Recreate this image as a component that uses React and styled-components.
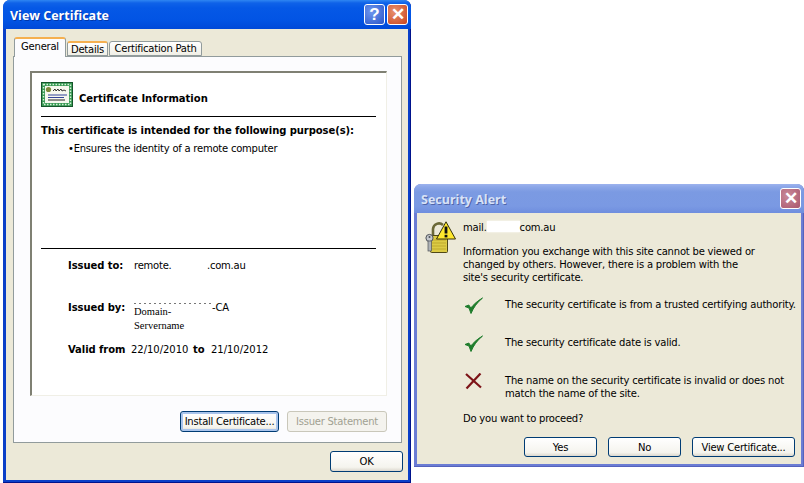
import React from 'react';
import styled, { createGlobalStyle } from 'styled-components';

const GlobalStyle = createGlobalStyle`
  html, body { margin: 0; padding: 0; background: #ffffff; }
  body { font-family: "DejaVu Sans", "Noto Sans", sans-serif; font-size: 10px; letter-spacing: -0.23px; color: #000; }
  #root { width: 804px; height: 483px; position: relative; overflow: hidden; }
`;

// dialogs sit on a free desktop, so they get coordinates
const Dialog = styled.div`
  position: absolute;
  left: ${(p) => p.$left}px;
  top: ${(p) => p.$top}px;
  width: ${(p) => p.$width}px;
  height: ${(p) => p.$height}px;
  box-sizing: border-box;
  display: flex;
  flex-direction: column;
  padding: 0 3px 3px;
  border-radius: 7px 7px 0 0;
  background: ${(p) => (p.$inactive ? '#6b7cd4' : '#0a3fc8')};
  box-shadow: ${(p) => (p.$inactive ? 'inset -1px -1px 0 #5563bd' : 'inset -1px -1px 0 #00138c')};
`;

const TitleBar = styled.div`
  height: ${(p) => p.$height}px;
  flex: none;
  margin: 0 -3px;
  padding: 2px 3px 0 7px;
  box-sizing: border-box;
  display: flex;
  align-items: center;
  justify-content: space-between;
  border-radius: 7px 7px 0 0;
  background: ${(p) =>
    p.$inactive
      ? 'linear-gradient(#9db3ee 0, #8ba6e8 3px, #7b9ae2 8px, #7a99e3 22px, #6f8ede 100%)'
      : 'linear-gradient(#2f86f2 0, #0f62e8 3px, #0558e6 8px, #0254e4 20px, #0049d8 100%)'};
`;

const TitleText = styled.span`
  font-family: "Open Sans", sans-serif;
  font-weight: 700;
  font-size: 12.5px;
  letter-spacing: 0;
  color: ${(p) => (p.$inactive ? '#d8e2f7' : '#ffffff')};
  text-shadow: 1px 1px 0 rgba(0, 0, 60, 0.35);
`;

const TitleButtons = styled.div`
  display: flex;
  gap: 2px;
  margin-top: -2px;
`;

const CaptionButton = styled.div`
  width: 21px;
  height: 21px;
  box-sizing: border-box;
  border: 1px solid #fff;
  border-radius: 3px;
  display: flex;
  align-items: center;
  justify-content: center;
  color: #fff;
  letter-spacing: 0;
  font: 700 17px "Liberation Sans", sans-serif;
  background: ${(p) =>
    p.$kind === 'help'
      ? 'radial-gradient(circle at 35% 35%, #6f97ee, #2a55c8)'
      : p.$kind === 'closeOff'
        ? 'radial-gradient(circle at 35% 35%, #c98a98, #a9566d)'
        : 'radial-gradient(circle at 35% 35%, #e8926f, #c8431d)'};
`;

const Body = styled.div`
  flex: 1;
  min-height: 0;
  background: #ece9d8;
  display: flex;
  flex-direction: column;
`;

const TabStrip = styled.div`
  display: flex;
  align-items: flex-end;
  height: 27px;
  flex: none;
  padding-left: 8px;
`;

const Tab = styled.div`
  height: ${(p) => (p.$active ? 20 : 15)}px;
  width: ${(p) => p.$width}px;
  box-sizing: border-box;
  margin-right: 1px;
  padding-top: ${(p) => (p.$active ? 2 : 1)}px;
  text-align: center;
  background: ${(p) => (p.$active ? '#fcfcfe' : 'linear-gradient(#fff, #f0efe6)')};
  border: 1px solid #919b9c;
  border-bottom: ${(p) => (p.$active ? 'none' : '1px solid #919b9c')};
  border-top: ${(p) => (p.$hot ? '2px solid #f5b050' : '1px solid #919b9c')};
  border-radius: 3px 3px 0 0;
  white-space: nowrap;
  margin-bottom: ${(p) => (p.$active ? -1 : 0)}px;
  position: relative;
  z-index: ${(p) => (p.$active ? 1 : 0)};
`;

const TabPanel = styled.div`
  width: 389px;
  height: 387px;
  margin-left: 7px;
  flex: none;
  box-sizing: border-box;
  background: #fcfcfe;
  border: 1px solid #919b9c;
  padding: 14px 14px 0 16px;
`;

const CertBox = styled.div`
  width: 357px;
  height: 325px;
  box-sizing: border-box;
  background: #ffffff;
  border-top: 2px solid #7f8073;
  border-left: 2px solid #7f8073;
  border-right: 1px solid #f0efe6;
  border-bottom: 1px solid #f0efe6;
  padding: 0 10px 0 9px;
  display: flex;
  flex-direction: column;
`;

const CertHeading = styled.div`
  height: 44px;
  flex: none;
  box-sizing: border-box;
  padding-top: 9px;
  display: flex;
  align-items: flex-start;
  gap: 6px;
  border-bottom: 1px solid #000;
  font-weight: 700;
  letter-spacing: 0;
  line-height: 33px;
`;

const Purpose = styled.div`
  height: 132px;
  flex: none;
  box-sizing: border-box;
  border-bottom: 1px solid #000;
  padding-top: 7px;
`;

const Strong = styled.div`
  font-weight: 700;
  letter-spacing: -0.07px;
  line-height: 13px;
`;

const Bullet = styled.div`
  margin: 5px 0 0 27px;
  line-height: 13px;
`;

const InfoRow = styled.div`
  display: flex;
  position: relative;
  padding-left: 27px;
  margin-top: ${(p) => p.$top}px;
  line-height: 13px;
`;

const RowLabel = styled.span`
  font-weight: 700;
  letter-spacing: -0.07px;
  width: ${(p) => p.$width}px;
  flex: none;
`;

const DateValue = styled.span`
  width: ${(p) => p.$width}px;
  flex: none;
  letter-spacing: -0.03px;
  white-space: nowrap;
`;

// what is left of the scrubbed issuer name: only the tops of the letters
const ScrubbedTops = styled.span`
  width: 78px;
  height: 1px;
  margin-top: 2px;
  flex: none;
  background: repeating-linear-gradient(90deg, #777 0 2px, transparent 2px 5px);
`;

const SerifNote = styled.span`
  position: absolute;
  left: 93px;
  top: 4px;
  width: 60px;
  font: 10.5px/14px "Liberation Serif", serif;
  letter-spacing: 0;
`;

const Redaction = styled.span`
  display: inline-block;
  width: 33px;
  height: 11px;
  vertical-align: -1px;
  background: #ffffff;
  box-shadow: 0 0 2px #ffffff;
`;

const ButtonRow = styled.div`
  display: flex;
  justify-content: flex-end;
  gap: ${(p) => p.$gap || 0}px;
  margin: ${(p) => p.$margin};
`;

const PushButton = styled.button`
  width: ${(p) => p.$width}px;
  height: ${(p) => p.$height || 21}px;
  box-sizing: border-box;
  padding: 0;
  font: inherit;
  letter-spacing: inherit;
  color: ${(p) => (p.disabled ? '#a1a192' : '#000')};
  border: 1px solid ${(p) => (p.disabled ? '#c9c7ba' : '#003c74')};
  border-radius: 3px;
  background: ${(p) => (p.disabled ? '#f4f3ee' : 'linear-gradient(#fff, #f5f4ee 80%, #dcd8ce)')};
  box-shadow: ${(p) => (p.$focused ? 'inset 0 0 0 2px #a9c4ec' : 'none')};
`;

const AlertBody = styled(Body)`
  padding: 8px 9px 0 8px;
`;

const AlertTop = styled.div`
  display: flex;
  gap: 7px;
`;

const AlertCopy = styled.div`
  line-height: 13px;
  letter-spacing: -0.2px;
`;

const AlertPara = styled.p`
  margin: 11px 0 0;
`;

const CheckList = styled.div`
  display: flex;
  flex-direction: column;
  margin: 14px 0 0 39px;
`;

const CheckRow = styled.div`
  display: flex;
  gap: 22px;
  line-height: 13px;
  letter-spacing: -0.18px;
  white-space: nowrap;
  height: 38px;
`;

const MarkSlot = styled.div`
  width: 19px;
  flex: none;
  margin-top: -1px;
`;

const Question = styled.div`
  margin: 0 0 0 38px;
  line-height: 13px;
`;

const CertIcon = () => (
  <svg width="32" height="25" viewBox="0 0 32 25" style={{ flex: 'none' }}>
    <rect x="0.5" y="0.5" width="31" height="24" fill="#3a9a55" stroke="#14552a" />
    <rect x="2.5" y="2.5" width="27" height="20" fill="none" stroke="#d8f2dc" strokeWidth="1.4" strokeDasharray="1.5 1.5" />
    <rect x="4" y="4" width="24" height="17" fill="#f6f8ee" />
    <circle cx="7.5" cy="7.5" r="2.6" fill="#7c8a3a" />
    <path d="M12 9 l2-2 1 2 2-2 1 2 2-2 1 2 2-1 2 1" fill="none" stroke="#222" strokeWidth="0.9" />
    <path d="M7 13h19M7 15.5h16" stroke="#33449a" strokeWidth="1" />
    <path d="M7 18h17" stroke="#222" strokeWidth="1" />
  </svg>
);

const LockWarnIcon = () => (
  <svg width="31" height="33" viewBox="0 0 31 33" style={{ flex: 'none' }}>
    <path d="M8 15V8a6 6 0 0 1 10-4" fill="none" stroke="#6b6838" strokeWidth="2.6" />
    <rect x="5.5" y="14.5" width="17" height="17" rx="1" fill="#dccb45" stroke="#4f4818" />
    <path d="M7 19h14M7 22h14M7 25h14M7 28h14" stroke="#bfa92f" />
    <circle cx="4.5" cy="17" r="3.6" fill="#c5c8cc" stroke="#4e5258" />
    <circle cx="4.5" cy="16" r="1" fill="#4e5258" />
    <rect x="3" y="20" width="3.4" height="10" fill="#aeb2b6" stroke="#4e5258" strokeWidth="0.7" />
    <path d="M21 0.8 L30.5 18 H11.5 Z" fill="#ffe92e" stroke="#35300c" strokeLinejoin="round" />
    <rect x="19.6" y="5.5" width="2.8" height="7" fill="#111" />
    <rect x="19.6" y="13.8" width="2.8" height="2.6" fill="#111" />
  </svg>
);

const CheckMark = () => (
  <svg width="19" height="18" viewBox="0 0 19 18">
    <path d="M1 9.5 L5 11 L7 16.5 C9.5 10.5 13 5.5 18.5 1 C13.5 4 9.5 7.5 6.8 11 L4.8 8 Z" fill="#1f7d2c" stroke="#1f7d2c" strokeWidth="1" strokeLinejoin="round" />
  </svg>
);

const CrossMark = () => (
  <svg width="19" height="18" viewBox="0 0 19 18">
    <path d="M2 1 L17 14.5M16.5 0.5 L2.5 15.5" fill="none" stroke="#7d1418" strokeWidth="2.2" />
  </svg>
);

export default function App() {
  return (
    <>
      <GlobalStyle />
      <Dialog $left={3} $top={0} $width={408} $height={483}>
        <TitleBar $height={29}>
          <TitleText>View Certificate</TitleText>
          <TitleButtons>
            <CaptionButton $kind="help">?</CaptionButton>
            <CaptionButton $kind="close">✕</CaptionButton>
          </TitleButtons>
        </TitleBar>
        <Body>
          <TabStrip>
            <Tab $active $hot $width={52}>General</Tab>
            <Tab $hot $width={41}>Details</Tab>
            <Tab $width={93}>Certification Path</Tab>
          </TabStrip>
          <TabPanel>
            <CertBox>
              <CertHeading>
                <CertIcon />
                Certificate Information
              </CertHeading>
              <Purpose>
                <Strong>This certificate is intended for the following purpose(s):</Strong>
                <Bullet>•Ensures the identity of a remote computer</Bullet>
              </Purpose>
              <InfoRow $top={10}>
                <RowLabel $width={66}>Issued to:</RowLabel>
                <span>remote.&nbsp;&nbsp;&nbsp;&nbsp;&nbsp;&nbsp;&nbsp;&nbsp;&nbsp;&nbsp;&nbsp;&nbsp;.com.au</span>
              </InfoRow>
              <InfoRow $top={29}>
                <RowLabel $width={66}>Issued by:</RowLabel>
                <ScrubbedTops />
                <span>-CA</span>
                <SerifNote>Domain-Servername</SerifNote>
              </InfoRow>
              <InfoRow $top={29}>
                <RowLabel $width={63}>Valid from</RowLabel>
                <DateValue $width={62}>22/10/2010</DateValue>
                <RowLabel $width={18}>to</RowLabel>
                <DateValue>21/10/2012</DateValue>
              </InfoRow>
            </CertBox>
            <ButtonRow $gap={8} $margin="15px 0 0">
              <PushButton $width={99} $focused>Install Certificate...</PushButton>
              <PushButton $width={100} disabled>Issuer Statement</PushButton>
            </ButtonRow>
          </TabPanel>
          <ButtonRow $margin="8px 5px 0 0">
            <PushButton $width={73}>OK</PushButton>
          </ButtonRow>
        </Body>
      </Dialog>

      <Dialog $left={414} $top={184} $width={390} $height={283} $inactive>
        <TitleBar $height={29} $inactive>
          <TitleText $inactive>Security Alert</TitleText>
          <TitleButtons>
            <CaptionButton $kind="closeOff">✕</CaptionButton>
          </TitleButtons>
        </TitleBar>
        <AlertBody>
          <AlertTop>
            <LockWarnIcon />
            <AlertCopy>
              <div>mail.<Redaction />com.au</div>
              <AlertPara>
                Information you exchange with this site cannot be viewed or<br />
                changed by others. However, there is a problem with the<br />
                site's security certificate.
              </AlertPara>
            </AlertCopy>
          </AlertTop>
          <CheckList>
            <CheckRow>
              <MarkSlot><CheckMark /></MarkSlot>
              <span>The security certificate is from a trusted certifying authority.</span>
            </CheckRow>
            <CheckRow>
              <MarkSlot><CheckMark /></MarkSlot>
              <span>The security certificate date is valid.</span>
            </CheckRow>
            <CheckRow>
              <MarkSlot><CrossMark /></MarkSlot>
              <span>The name on the security certificate is invalid or does not<br />match the name of the site.</span>
            </CheckRow>
          </CheckList>
          <Question>Do you want to proceed?</Question>
          <ButtonRow $gap={11} $margin="12px -3px 0 0">
            <PushButton $width={73} $height={20}>Yes</PushButton>
            <PushButton $width={73} $height={20}>No</PushButton>
            <PushButton $width={103} $height={20}>View Certificate...</PushButton>
          </ButtonRow>
        </AlertBody>
      </Dialog>
    </>
  );
}
